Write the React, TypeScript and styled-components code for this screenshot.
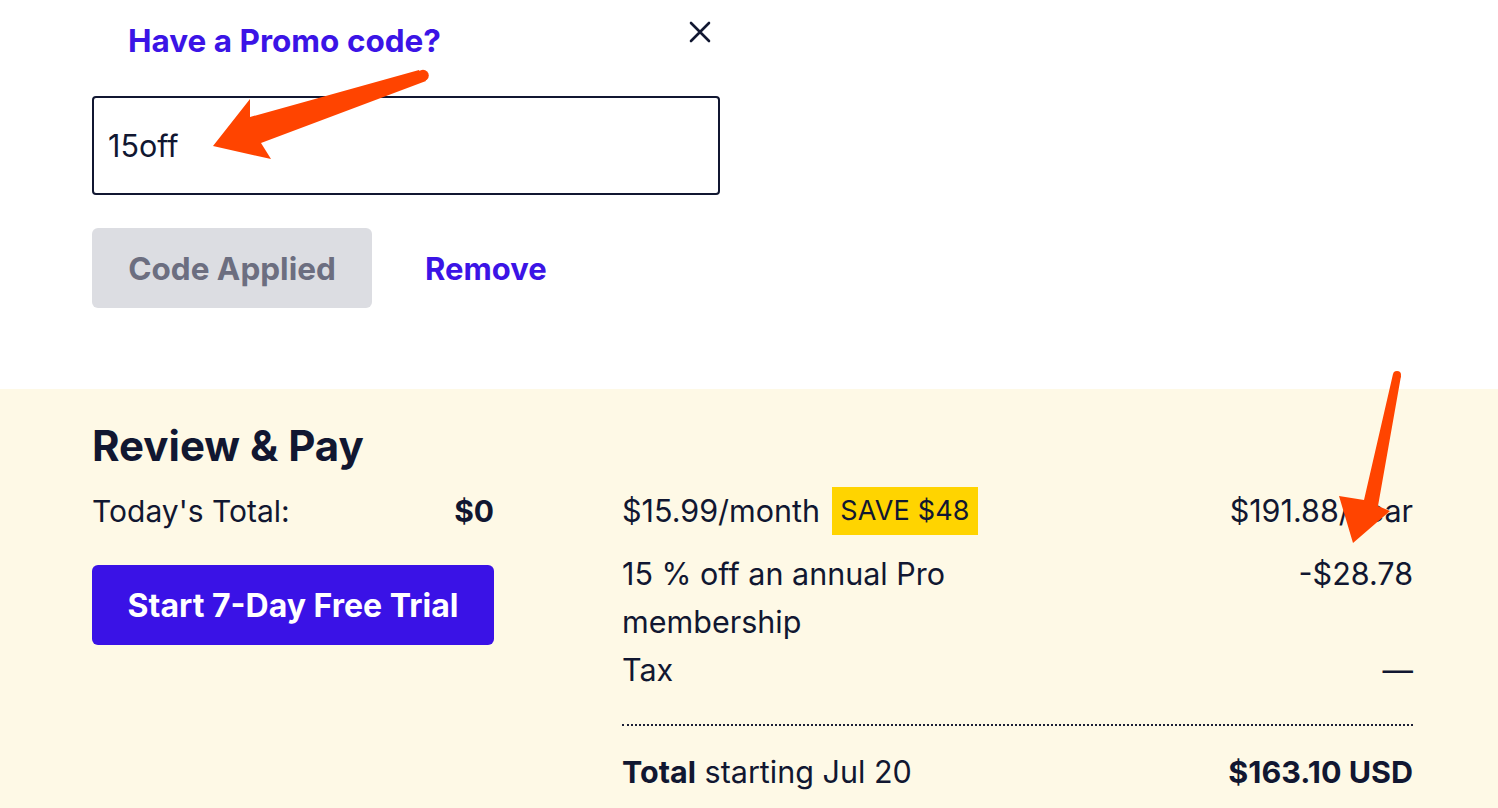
import React from 'react'
import styled, { createGlobalStyle } from 'styled-components'

const GlobalStyle = createGlobalStyle`
  html, body {
    margin: 0;
    padding: 0;
    background: #ffffff;
  }
  body {
    font-family: Inter, 'Noto Sans', sans-serif;
    color: #111731;
  }
`

const Page = styled.div`
  position: relative;
  width: 1498px;
  height: 808px;
  overflow: hidden;
  display: flex;
  flex-direction: column;
`

const PromoSection = styled.section`
  padding: 17px 0 81px 92px;
  display: flex;
  flex-direction: column;
  width: 628px;
`

const PromoHeader = styled.div`
  display: flex;
  align-items: center;
  justify-content: space-between;
  height: 48px;
  padding: 0 8px 0 36px;
  margin-bottom: 31px;
`

const PromoTitle = styled.h2`
  margin: 0;
  font-size: 31.5px;
  font-weight: 700;
  line-height: 48px;
  color: #3b14e6;
`

const CloseButton = styled.button`
  border: 0;
  background: none;
  padding: 0;
  width: 24px;
  height: 24px;
  display: flex;
  align-items: center;
  justify-content: center;
  color: #111731;
  position: relative;
  top: -9px;
`

const CodeInput = styled.input`
  box-sizing: border-box;
  width: 628px;
  height: 99px;
  border: 2px solid #111731;
  border-radius: 4px;
  padding: 0 14px;
  font-family: Inter, sans-serif;
  font-size: 30.5px;
  color: #111731;
  background: #fff;
  outline: none;
  margin-bottom: 33px;
`

const ActionRow = styled.div`
  display: flex;
  align-items: center;
  gap: 53px;
`

const AppliedButton = styled.button`
  width: 280px;
  height: 80px;
  border: 0;
  border-radius: 6px;
  background: #dcdde2;
  color: #6c6e80;
  font-family: Inter, sans-serif;
  font-size: 31.5px;
  font-weight: 700;
`

const LinkButton = styled.button`
  border: 0;
  background: none;
  padding: 0;
  color: #3b14e6;
  font-family: Inter, sans-serif;
  font-size: 31px;
  font-weight: 700;
`

const ReviewSection = styled.section`
  flex: 1;
  background: #fef9e6;
  padding: 32px 85px 0 92px;
`

const ReviewTitle = styled.h1`
  margin: 0 0 16px;
  font-size: 42px;
  line-height: 50px;
  font-weight: 700;
  color: #111731;
`

const Columns = styled.div`
  display: grid;
  grid-template-columns: 402px 1fr;
  column-gap: 128px;
`

const LeftCol = styled.div`
  display: flex;
  flex-direction: column;
`

const TotalLine = styled.div`
  display: flex;
  justify-content: space-between;
  align-items: center;
  height: 48px;
  font-size: 30px;
  margin-bottom: 30px;
`

const Strong = styled.span`
  font-weight: 700;
`

const PrimaryButton = styled.button`
  width: 402px;
  height: 80px;
  border: 0;
  border-radius: 6px;
  background: #3a12e6;
  color: #ffffff;
  font-family: Inter, sans-serif;
  font-size: 32px;
  font-weight: 700;
`

const RightCol = styled.div`
  display: flex;
  flex-direction: column;
  font-size: 30.5px;
`

const Line = styled.div<{ $gap?: number }>`
  display: flex;
  justify-content: space-between;
  align-items: flex-start;
  line-height: 48px;
  margin-bottom: ${p => p.$gap ?? 0}px;
`

const PriceLabel = styled.div`
  display: flex;
  align-items: center;
  gap: 12px;
`

const Badge = styled.span`
  background: #ffd400;
  font-size: 27px;
  line-height: 48px;
  padding: 0 8px;
  letter-spacing: 0.2px;
`

const Desc = styled.div`
  max-width: 340px;
`

const Dotted = styled.div`
  border-top: 2px dotted #1c2036;
  margin: 30px 0 22px;
`

const Overlay = styled.svg`
  position: absolute;
  left: 0;
  top: 0;
  pointer-events: none;
`

export default function App() {
  return (
    <Page>
      <GlobalStyle />
      <PromoSection>
        <PromoHeader>
          <PromoTitle>Have a Promo code?</PromoTitle>
          <CloseButton aria-label="Close">
            <svg width="22" height="22" viewBox="0 0 22 22">
              <path d="M2 2 L20 20 M20 2 L2 20" stroke="currentColor" strokeWidth="2.6" strokeLinecap="round" />
            </svg>
          </CloseButton>
        </PromoHeader>
        <CodeInput defaultValue="15off" />
        <ActionRow>
          <AppliedButton disabled>Code Applied</AppliedButton>
          <LinkButton>Remove</LinkButton>
        </ActionRow>
      </PromoSection>

      <ReviewSection>
        <ReviewTitle>Review &amp; Pay</ReviewTitle>
        <Columns>
          <LeftCol>
            <TotalLine>
              <span>Today's Total:</span>
              <Strong>$0</Strong>
            </TotalLine>
            <PrimaryButton>Start 7-Day Free Trial</PrimaryButton>
          </LeftCol>
          <RightCol>
            <Line $gap={15}>
              <PriceLabel>
                <span>$15.99/month</span>
                <Badge>SAVE $48</Badge>
              </PriceLabel>
              <span>$191.88/year</span>
            </Line>
            <Line>
              <Desc>15 % off an annual Pro membership</Desc>
              <span>-$28.78</span>
            </Line>
            <Line>
              <span>Tax</span>
              <span>—</span>
            </Line>
            <Dotted />
            <Line>
              <span>
                <Strong>Total</Strong> starting Jul 20
              </span>
              <Strong>$163.10 USD</Strong>
            </Line>
          </RightCol>
        </Columns>
      </ReviewSection>

      <Overlay width="1498" height="808" viewBox="0 0 1498 808">
        <g fill="#ff4400">
          <path d="M419 70 L250 117 L250 99 L213 146 L271 159 L261 143 L426 81 Z" />
          <circle cx="423" cy="75.5" r="5.8" />
          <path d="M1393 374 L1364 500 L1339 496 L1353 543 L1390 511 L1378 506 L1401 376 Z" />
          <circle cx="1397" cy="375" r="4" />
        </g>
      </Overlay>
    </Page>
  )
}
